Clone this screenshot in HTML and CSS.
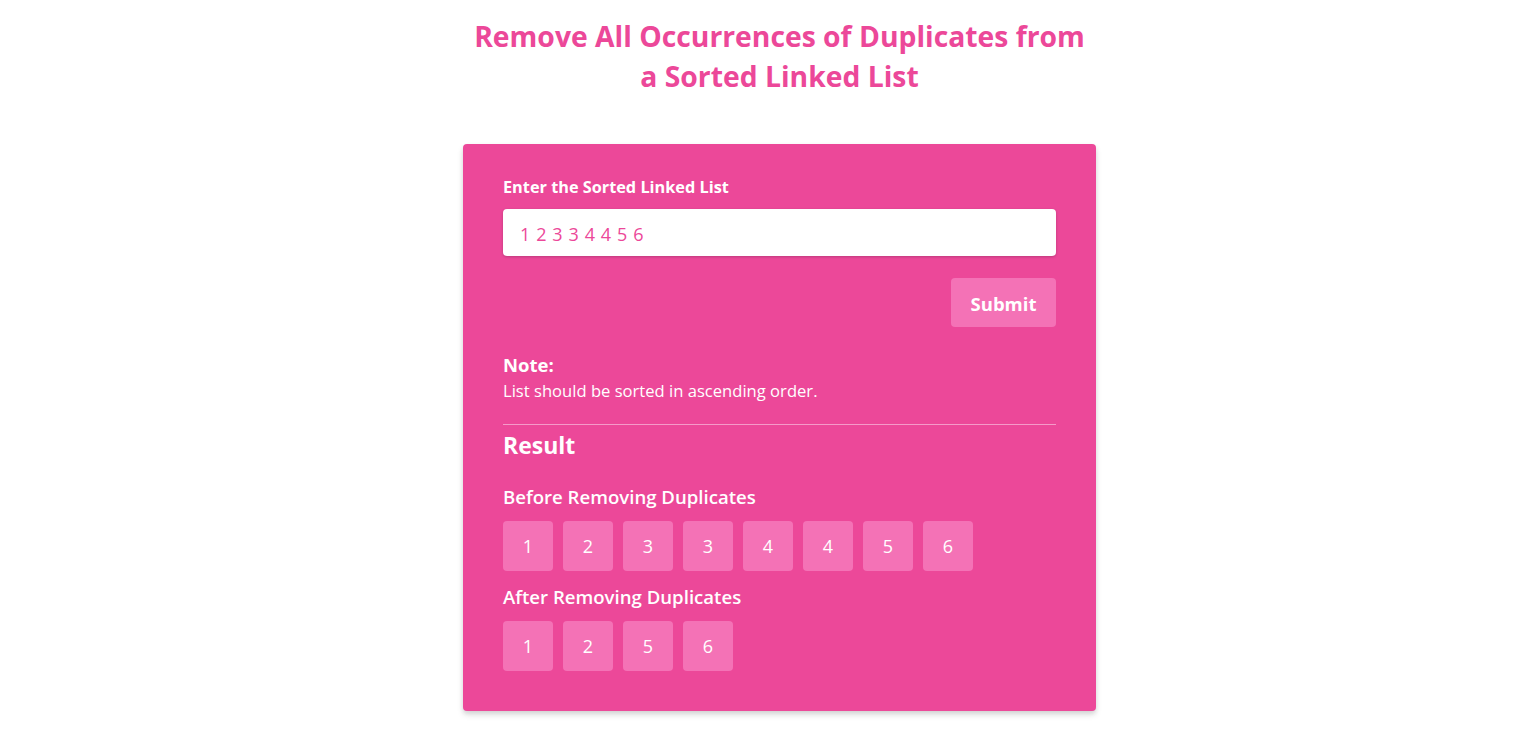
FILE: index.html
```html
<!DOCTYPE html>
<html lang="en">
<head>
<meta charset="utf-8">
<title>Remove All Occurrences of Duplicates</title>
<link rel="stylesheet" href="styles.css">
</head>
<body>
<main class="page">
  <h1 class="title">Remove All Occurrences of Duplicates from<br>a Sorted Linked List</h1>
  <section class="card">
    <label class="label" for="list">Enter the Sorted Linked List</label>
    <input id="list" class="input" type="text" value="1 2 3 3 4 4 5 6">
    <div class="actions">
      <button class="submit" type="button">Submit</button>
    </div>
    <div class="note">
      <div class="note-title">Note:</div>
      <div class="note-text">List should be sorted in ascending order.</div>
    </div>
    <hr class="divider">
    <h2 class="result-title">Result</h2>
    <div class="group">
      <div class="group-title">Before Removing Duplicates</div>
      <div class="nodes">
        <div class="node">1</div><div class="node">2</div><div class="node">3</div><div class="node">3</div>
        <div class="node">4</div><div class="node">4</div><div class="node">5</div><div class="node">6</div>
      </div>
    </div>
    <div class="group">
      <div class="group-title">After Removing Duplicates</div>
      <div class="nodes">
        <div class="node">1</div><div class="node">2</div><div class="node">5</div><div class="node">6</div>
      </div>
    </div>
  </section>
</main>
</body>
</html>
```

FILE: styles.css
```css
* { box-sizing: border-box; }
body {
  margin: 0;
  background: #ffffff;
  font-family: "Open Sans", "Noto Sans", sans-serif;
  color: #ffffff;
}
.page {
  padding: 16px 0 40px 46px;
  display: flex;
  flex-direction: column;
  align-items: center;
}
.title {
  margin: 0;
  color: #ec4899;
  font-size: 28.3px;
  line-height: 40px;
  font-weight: 700;
  text-align: center;
}
.card {
  margin-top: 48px;
  width: 633px;
  background: #ec4899;
  border-radius: 4px;
  padding: 32px 40px 40px;
  box-shadow: 0 4px 6px rgba(0,0,0,0.12), 0 2px 4px rgba(0,0,0,0.08);
  display: flex;
  flex-direction: column;
}
.label {
  font-size: 16.3px;
  font-weight: 700;
  line-height: 22px;
  margin-bottom: 11px;
}
.input {
  height: 47px;
  border: none;
  border-radius: 4px;
  padding: 3px 17px 0;
  font-family: inherit;
  font-size: 18px;
  letter-spacing: 0.6px;
  color: #ec4899;
  background: #fff;
  box-shadow: 0 1px 3px rgba(0,0,0,0.2);
  outline: none;
}
.actions {
  display: flex;
  justify-content: flex-end;
  margin-top: 22px;
}
.submit {
  width: 105px;
  height: 49px;
  border: none;
  border-radius: 4px;
  padding: 2px 0 0;
  background: #f472b6;
  color: #fff;
  font-family: inherit;
  font-size: 18.5px;
  font-weight: 700;
}
.note {
  margin-top: 24px;
}
.note-title {
  font-size: 18.5px;
  font-weight: 700;
  line-height: 28px;
}
.note-text {
  font-size: 16.6px;
  line-height: 24px;
}
.divider {
  margin: 21px 0 0;
  border: none;
  border-top: 1px solid #f59ac9;
}
.result-title {
  margin: 4px 0 0;
  font-size: 23px;
  line-height: 32px;
  font-weight: 700;
}
.group {
  margin-top: 24px;
}
.group + .group {
  margin-top: 14px;
}
.group-title {
  font-size: 18.6px;
  font-weight: 600;
  line-height: 24px;
  margin-bottom: 12px;
}
.nodes {
  display: flex;
  gap: 10px;
}
.node {
  width: 50px;
  height: 50px;
  border-radius: 4px;
  background: #f472b6;
  display: flex;
  align-items: center;
  justify-content: center;
  font-size: 18px;
}
```
